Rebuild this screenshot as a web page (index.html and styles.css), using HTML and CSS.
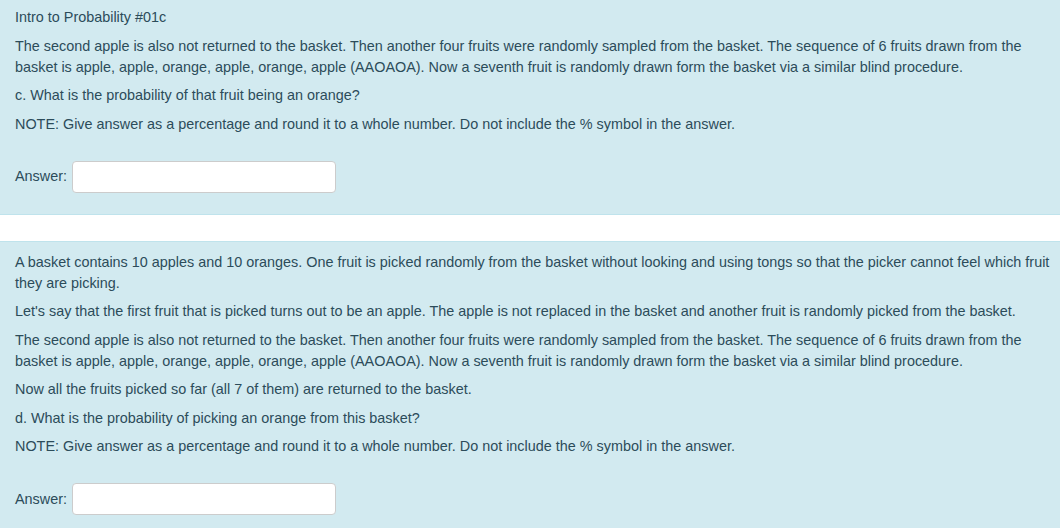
FILE: index.html
```html
<!DOCTYPE html>
<html>
<head>
<meta charset="utf-8">
<title>Intro to Probability</title>
<link rel="stylesheet" href="styles.css">
</head>
<body>
<div class="que">
  <div class="formulation first">
    <p class="qtitle">Intro to Probability #01c</p>
    <p>The second apple is also not returned to the basket. Then another four fruits were randomly sampled from the basket. The sequence of 6 fruits drawn from the basket is apple, apple, orange, apple, orange, apple (AAOAOA). Now a seventh fruit is randomly drawn form the basket via a similar blind procedure.</p>
    <p>c. What is the probability of that fruit being an orange?</p>
    <p>NOTE: Give answer as a percentage and round it to a whole number. Do not include the % symbol in the answer.</p>
    <div class="ablock">
      <label class="alabel" for="a1">Answer:</label>
      <input class="ainput" id="a1" type="text">
    </div>
  </div>
</div>
<div class="que">
  <div class="formulation">
    <p>A basket contains 10 apples and 10 oranges. One fruit is picked randomly from the basket without looking and using tongs so that the picker cannot feel which fruit they are picking.</p>
    <p>Let's say that the first fruit that is picked turns out to be an apple. The apple is not replaced in the basket and another fruit is randomly picked from the basket.</p>
    <p>The second apple is also not returned to the basket. Then another four fruits were randomly sampled from the basket. The sequence of 6 fruits drawn from the basket is apple, apple, orange, apple, orange, apple (AAOAOA). Now a seventh fruit is randomly drawn form the basket via a similar blind procedure.</p>
    <p>Now all the fruits picked so far (all 7 of them) are returned to the basket.</p>
    <p>d. What is the probability of picking an orange from this basket?</p>
    <p>NOTE: Give answer as a percentage and round it to a whole number. Do not include the % symbol in the answer.</p>
    <div class="ablock">
      <label class="alabel" for="a2">Answer:</label>
      <input class="ainput" id="a2" type="text">
    </div>
  </div>
</div>
</body>
</html>
```
FILE: styles.css
```css
html, body {
  margin: 0;
  padding: 0;
  background: #ffffff;
}
body {
  font-family: "Liberation Sans", Arial, Helvetica, sans-serif;
  font-size: 14.4px;
  line-height: 21px;
  color: #2c4c5a;
}
.que {
  margin-bottom: 26px;
}
.formulation {
  background: #d2eaf0;
  border-top: 1px solid #bfe3ec;
  border-bottom: 1px solid #bfe3ec;
  padding: 10px 5px 21px 15px;
}
.formulation.first {
  border-top: none;
  padding-top: 7px;
}
.formulation p {
  margin: 0 0 7.5px 0;
}
.ablock {
  display: flex;
  align-items: center;
  gap: 5px;
  margin-top: 26px;
}
.alabel {
  color: #2c4c5a;
}
.ainput {
  width: 264px;
  height: 32px;
  box-sizing: border-box;
  border: 1px solid #cccccc;
  border-radius: 4px;
  background: #ffffff;
  padding: 4px 6px;
  margin: 0;
  font: inherit;
}
```
